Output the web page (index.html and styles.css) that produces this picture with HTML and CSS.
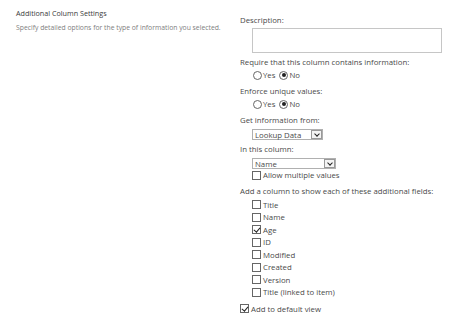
FILE: index.html
```html
<!DOCTYPE html>
<html lang="en">
<head>
  <meta charset="UTF-8"/>
  <title>Additional Column Settings</title>
  <link rel="stylesheet" href="styles.css">
</head>
<body>
  <div class="section">
    <div class="intro">
      <div class="intro-title">Additional Column Settings</div>
      <div class="intro-desc">Specify detailed options for the type of information you selected.</div>
    </div>
    <div class="fields">
      <div class="label first">Description:</div>
      <div class="indent"><div class="textarea"></div></div>

      <div class="label">Require that this column contains information:</div>
      <div class="indent radios">
        <span class="radio"></span><span class="opt">Yes</span>
        <span class="radio on"></span><span class="opt">No</span>
      </div>

      <div class="label">Enforce unique values:</div>
      <div class="indent radios">
        <span class="radio"></span><span class="opt">Yes</span>
        <span class="radio on"></span><span class="opt">No</span>
      </div>

      <div class="label">Get information from:</div>
      <div class="indent">
        <div class="select short"><span>Lookup Data</span><span class="arrow"></span></div>
      </div>

      <div class="label">In this column:</div>
      <div class="indent">
        <div class="select long"><span>Name</span><span class="arrow"></span></div>
        <div class="check"><span class="box"></span>Allow multiple values</div>
      </div>

      <div class="label">Add a column to show each of these additional fields:</div>
      <div class="indent list">
        <div class="check"><span class="box"></span>Title</div>
        <div class="check"><span class="box"></span>Name</div>
        <div class="check"><span class="box on"></span>Age</div>
        <div class="check"><span class="box"></span>ID</div>
        <div class="check"><span class="box"></span>Modified</div>
        <div class="check"><span class="box"></span>Created</div>
        <div class="check"><span class="box"></span>Version</div>
        <div class="check"><span class="box"></span>Title (linked to item)</div>
      </div>

      <div class="check default"><span class="box on"></span>Add to default view</div>
    </div>
  </div>
</body>
</html>
```

FILE: styles.css
```css
body { margin:0; background:#fff; font-family:"Open Sans","Noto Sans",sans-serif; color:#4a4a4a; }
.section { display:flex; }
.intro { width:224px; padding:8px 0 0 16px; }
.intro-title { font-size:7.2px; line-height:11px; color:#3a3a3a; }
.intro-desc { font-size:6.8px; line-height:11px; margin-top:3px; color:#808080; }
.fields { padding-top:14px; font-size:7.8px; }
.label { line-height:12px; margin-top:3px; }
.label.first { margin-top:0; }
.indent { padding-left:12px; }
.textarea { width:188px; height:23px; border:1px solid #c6c6c6; margin-top:2px; }
.radios { display:flex; align-items:center; height:14px; }
.radio { width:9px; height:9px; border:1px solid #666; border-radius:50%; box-sizing:border-box; position:relative; margin:0 1px 0 1px; }
.radio.on::after { content:""; position:absolute; left:1.5px; top:1.5px; width:4px; height:4px; border-radius:50%; background:#222; }
.opt { margin-right:3px; }
.select { display:flex; justify-content:space-between; align-items:center; height:11px; border:1px solid #b0b0b0; margin-top:3px; padding-left:2px; box-sizing:border-box; }
.select.short { width:71px; }
.select.long { width:84px; }
.arrow { width:11px; height:9px; border:1px solid #999; background:#f4f4f4; box-sizing:border-box; position:relative; }
.arrow::after { content:""; position:absolute; left:2.5px; top:0.5px; width:3px; height:3px; border-right:1.5px solid #222; border-bottom:1.5px solid #222; transform:rotate(45deg); }
.check { display:flex; align-items:center; height:12.5px; }
.box { width:9px; height:9px; border:1px solid #666; box-sizing:border-box; margin-right:2px; position:relative; }
.box.on::after { content:""; position:absolute; left:2px; top:0; width:2.5px; height:5px; border-right:1.5px solid #222; border-bottom:1.5px solid #222; transform:rotate(40deg); }
.list { margin-top:2px; }
.default { margin-top:4px; }
```
